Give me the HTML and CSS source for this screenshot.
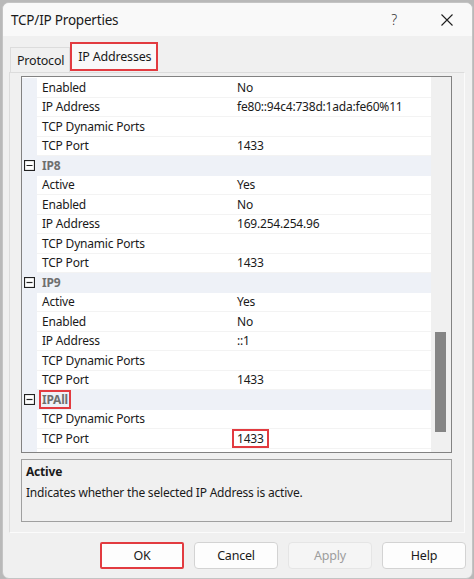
FILE: index.html
```html
<!DOCTYPE html>
<html>
<head>
<meta charset="utf-8">
<link rel="stylesheet" href="styles.css">
</head>
<body>
<div class="window">
  <div class="titlebar">
    <span class="title">TCP/IP Properties</span>
    <span class="help">?</span>
    <svg class="close" width="12" height="12" viewBox="0 0 12 12"><path d="M0.5 0.5 L11.5 11.5 M11.5 0.5 L0.5 11.5" stroke="#1f1f1f" stroke-width="1.1" fill="none"/></svg>
  </div>
  <div class="tabs">
    <div class="tab">Protocol</div>
    <div class="tab selected">IP Addresses</div>
  </div>
  <div class="page">
    <div class="grid">
      <div class="rows">
        <div class="row"><div class="gut"></div><div class="name">Enabled</div><div class="val">No</div></div>
        <div class="row"><div class="gut"></div><div class="name">IP Address</div><div class="val">fe80::94c4:738d:1ada:fe60%11</div></div>
        <div class="row"><div class="gut"></div><div class="name">TCP Dynamic Ports</div><div class="val"></div></div>
        <div class="row"><div class="gut"></div><div class="name">TCP Port</div><div class="val">1433</div></div>
        <div class="row cat"><div class="gut"><svg width="11" height="11" viewBox="0 0 11 11"><rect x="0.5" y="0.5" width="10" height="10" fill="#fff" stroke="#222" stroke-width="1.2"/><path d="M2.5 5.5 H8.5" stroke="#222" stroke-width="1.2"/></svg></div><div class="name">IP8</div><div class="val"></div></div>
        <div class="row"><div class="gut"></div><div class="name">Active</div><div class="val">Yes</div></div>
        <div class="row"><div class="gut"></div><div class="name">Enabled</div><div class="val">No</div></div>
        <div class="row"><div class="gut"></div><div class="name">IP Address</div><div class="val">169.254.254.96</div></div>
        <div class="row"><div class="gut"></div><div class="name">TCP Dynamic Ports</div><div class="val"></div></div>
        <div class="row"><div class="gut"></div><div class="name">TCP Port</div><div class="val">1433</div></div>
        <div class="row cat"><div class="gut"><svg width="11" height="11" viewBox="0 0 11 11"><rect x="0.5" y="0.5" width="10" height="10" fill="#fff" stroke="#222" stroke-width="1.2"/><path d="M2.5 5.5 H8.5" stroke="#222" stroke-width="1.2"/></svg></div><div class="name">IP9</div><div class="val"></div></div>
        <div class="row"><div class="gut"></div><div class="name">Active</div><div class="val">Yes</div></div>
        <div class="row"><div class="gut"></div><div class="name">Enabled</div><div class="val">No</div></div>
        <div class="row"><div class="gut"></div><div class="name">IP Address</div><div class="val">::1</div></div>
        <div class="row"><div class="gut"></div><div class="name">TCP Dynamic Ports</div><div class="val"></div></div>
        <div class="row"><div class="gut"></div><div class="name">TCP Port</div><div class="val">1433</div></div>
        <div class="row cat"><div class="gut"><svg width="11" height="11" viewBox="0 0 11 11"><rect x="0.5" y="0.5" width="10" height="10" fill="#fff" stroke="#222" stroke-width="1.2"/><path d="M2.5 5.5 H8.5" stroke="#222" stroke-width="1.2"/></svg></div><div class="name"><span class="mark mark-name">IPAll</span></div><div class="val"></div></div>
        <div class="row"><div class="gut"></div><div class="name">TCP Dynamic Ports</div><div class="val"></div></div>
        <div class="row"><div class="gut"></div><div class="name">TCP Port</div><div class="val"><span class="mark mark-val">1433</span></div></div>
        <div class="filler"><div class="gut"></div></div>
      </div>
      <div class="scrollbar"><div class="thumb"></div></div>
    </div>
    <div class="desc">
      <div class="desc-title">Active</div>
      <div class="desc-text">Indicates whether the selected IP Address is active.</div>
    </div>
  </div>
  <div class="buttons">
    <button class="btn ok">OK</button>
    <button class="btn">Cancel</button>
    <button class="btn disabled">Apply</button>
    <button class="btn">Help</button>
  </div>
</div>
</body>
</html>
```

FILE: styles.css
```css
* { box-sizing: border-box; }
html, body { margin: 0; padding: 0; }
body {
  background: #b9b9b9;
  width: 474px;
  height: 579px;
  overflow: hidden;
  font-family: "Noto Sans", "Open Sans", sans-serif;
  font-size: 12px;
  letter-spacing: -0.2px;
  color: #1a1a1a;
}
.window {
  margin: 2px 0 0 2px;
  width: 471px;
  height: 577px;
  background: #f0f0f0;
  border: 1px solid #c4c4c4;
  border-radius: 7px;
  display: flex;
  flex-direction: column;
  overflow: hidden;
}
.titlebar {
  height: 33px;
  flex: none;
  background: #f9f9f9;
  display: flex;
  align-items: center;
  padding: 0 19px 0 8px;
}
.title {
  font-size: 13.5px;
  color: #1a1a1a;
  flex: 1;
}
.help {
  font-size: 14px;
  font-weight: 300;
  color: #333;
  margin-right: 44px;
}
.close { display: block; }
.tabs {
  height: 36px;
  flex: none;
  display: flex;
  align-items: flex-end;
  padding-left: 7px;
}
.tab {
  height: 25px;
  padding: 0 5px 0 6px;
  display: flex;
  align-items: center;
  border: 1px solid #dcdcdc;
  border-bottom: none;
  font-size: 12.5px;
  background: #f0f0f0;
}
.tab.selected {
  height: 29px;
  padding: 0 5px 1px 6px;
  background: #f9f9f9;
  border: 2px solid #e23b40;
  margin-bottom: 1px;
}
.page {
  margin-left: 6px;
  width: 456px;
  height: 461px;
  flex: none;
  border: 1px solid #dcdcdc;
  border-right-color: #fbfbfb;
  border-bottom-color: #fbfbfb;
  padding: 3px 0 0 11px;
  display: flex;
  flex-direction: column;
  gap: 6px;
}
.grid {
  width: 431px;
  height: 377px;
  flex: none;
  border: 1px solid #828282;
  background: #fff;
  display: flex;
}
.rows {
  width: 409px;
  display: flex;
  flex-direction: column;
  padding-top: 1px;
}
.row {
  height: 19.5px;
  flex: none;
  display: flex;
}
.row .name, .row .val {
  border-bottom: 1px solid #f3f3f3;
  display: flex;
  align-items: center;
  white-space: nowrap;
}
.gut {
  width: 15px;
  flex: none;
  background: #eef1f7;
  display: flex;
  align-items: center;
  padding-left: 2px;
}
.name {
  width: 195px;
  padding-left: 5px;
  flex: none;
}
.val {
  flex: 1;
  padding-left: 5px;
}
.row.cat .name, .row.cat .val {
  background: #eef1f7;
  border-bottom-color: #eef1f7;
}
.row.cat .name {
  font-weight: bold;
  color: #6f6f6f;
}
.filler {
  flex: 1;
  display: flex;
}
.mark {
  display: inline-flex;
  align-items: center;
  height: 19px;
  border: 2px solid #e23b40;
}
.mark-name { margin-left: -3px; padding: 0 1px; }
.mark-val { margin-left: -5px; padding: 0 3px; }
.scrollbar {
  flex: 1;
  background: #f0f0f0;
  padding: 255px 0 0 4px;
}
.thumb {
  width: 11px;
  height: 100px;
  background: #858585;
}
.desc {
  width: 431px;
  height: 63px;
  flex: none;
  border: 1px solid #a0a0a0;
  background: #f0f0f0;
  padding: 3px 4px;
}
.desc-title {
  font-weight: bold;
  line-height: 18px;
}
.desc-text {
  line-height: 18px;
  margin-top: 3px;
}
.buttons {
  display: flex;
  justify-content: flex-end;
  gap: 10px;
  padding: 9px 6px 0 0;
}
.btn {
  width: 84px;
  height: 27px;
  border: 1px solid #d3d3d3;
  border-radius: 4px;
  background: #fdfdfd;
  font-family: "Noto Sans", "Open Sans", sans-serif;
  font-size: 12.5px;
  letter-spacing: -0.2px;
  color: #1a1a1a;
  padding: 0;
}
.btn.ok { border: 2px solid #e23b40; border-radius: 2px; }
.btn.disabled { background: #f5f5f5; color: #9d9d9d; border-color: #e5e5e5; }
```
